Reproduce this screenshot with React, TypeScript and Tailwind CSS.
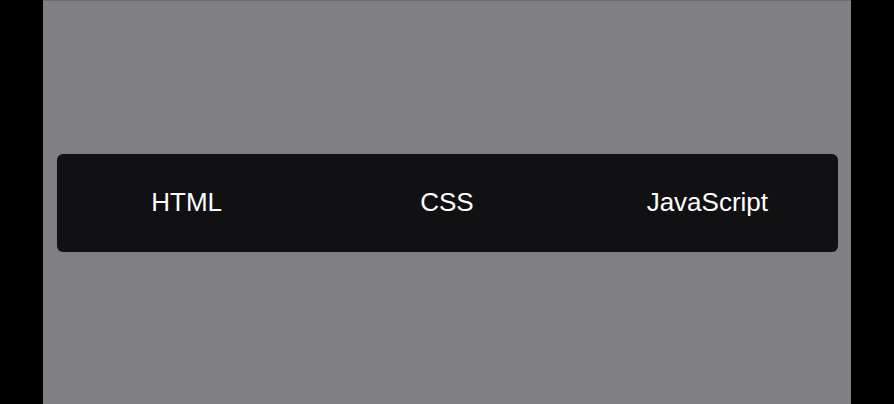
import React from 'react';

const items = ['HTML', 'CSS', 'JavaScript'];

const App = () => {
  return (
    <div className="w-[894px] h-[404px] bg-black flex justify-center">
      <div className="w-[808px] h-full bg-[#807f81] flex items-center justify-center border-t border-[#6a6a6a]">
        <div className="w-[781px] h-[98px] bg-[#111013] rounded-[6px] grid grid-cols-3 items-center">
          {items.map((item) => (
            <div
              key={item}
              className="text-center text-white text-[26px] font-['Liberation_Sans',Arial,sans-serif]"
            >
              {item}
            </div>
          ))}
        </div>
      </div>
    </div>
  );
};

export default App;
